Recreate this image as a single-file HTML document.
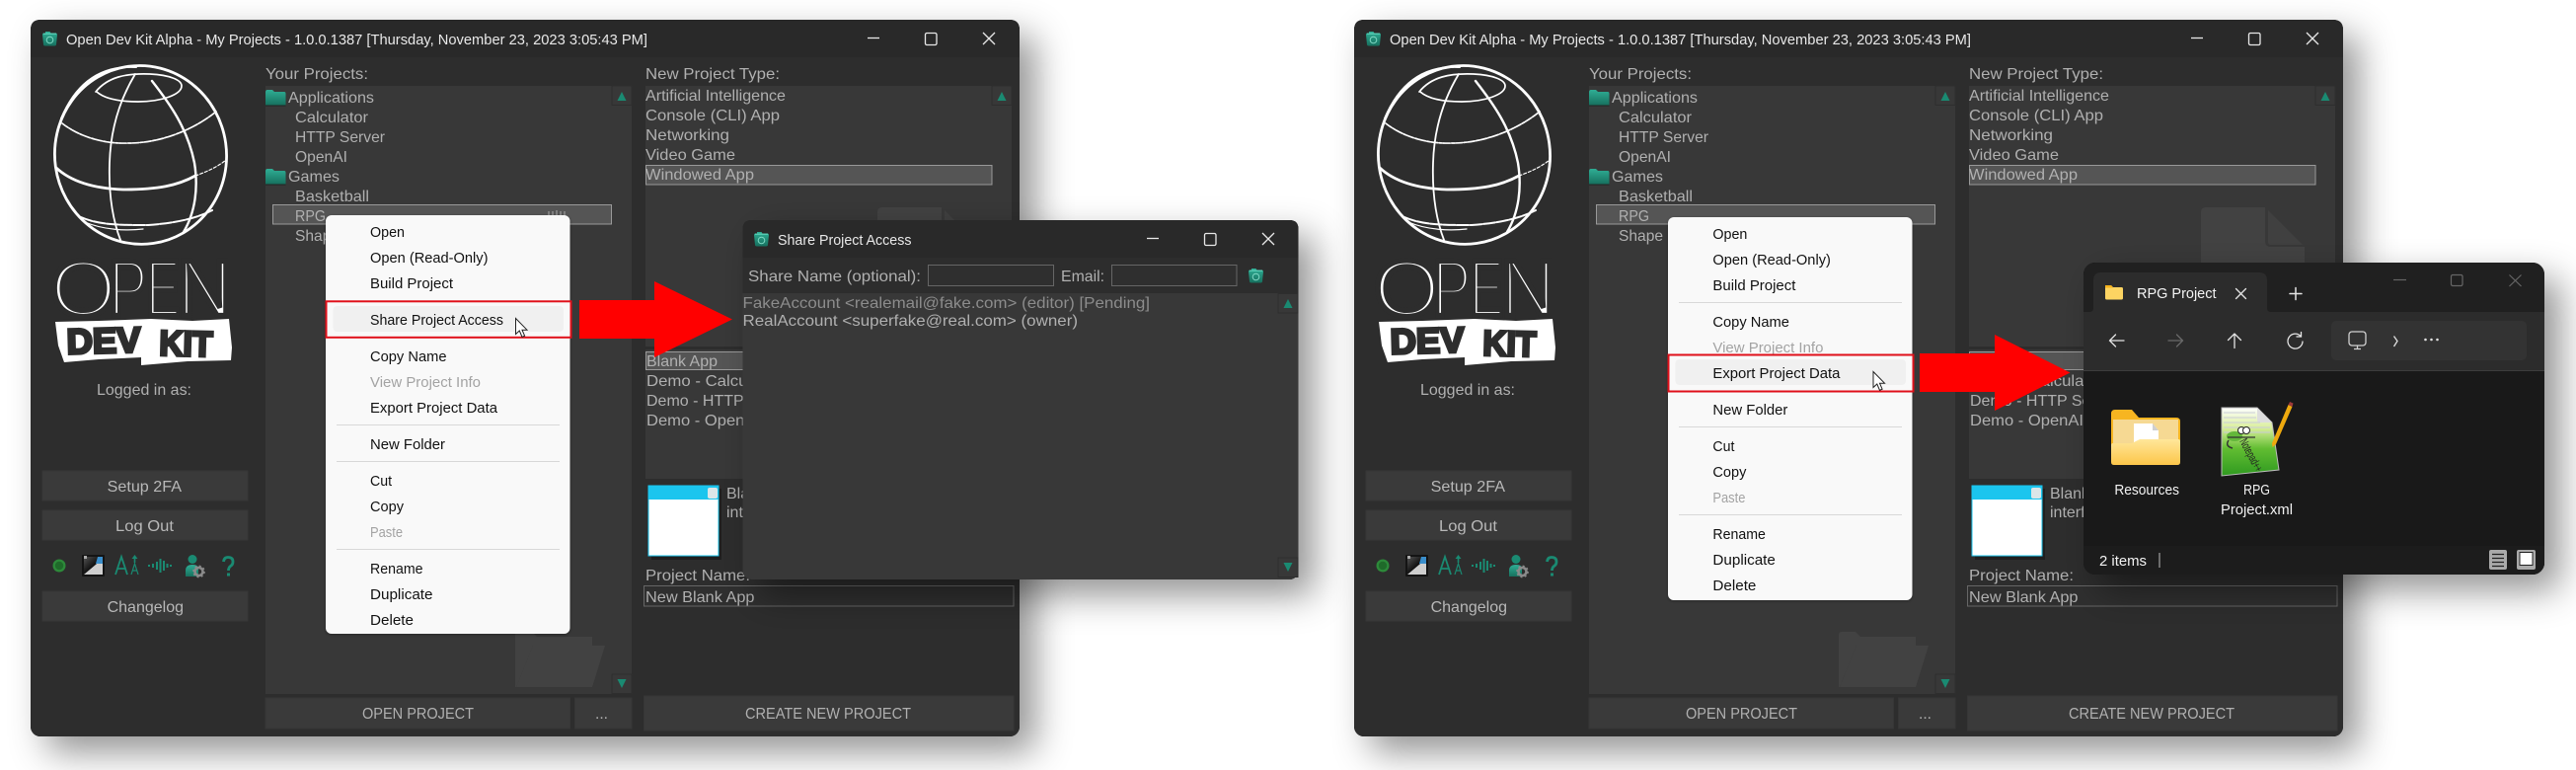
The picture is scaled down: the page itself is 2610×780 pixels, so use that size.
<!DOCTYPE html>
<html><head><meta charset="utf-8"><title>Open Dev Kit</title>
<style>
html,body{margin:0;padding:0;background:#fff;width:2610px;height:780px;overflow:hidden}
svg{position:absolute;left:0;top:0;display:block}
text{font-family:"Liberation Sans",sans-serif;white-space:pre}
.t{font-size:16px;fill:#b0b0b0}
.b{font-size:16px;fill:#b8b8b8}
.h{font-size:15px;fill:#e8e8e8}
.m{font-size:15px;fill:#111}
.g{font-size:15px;fill:#a3a3a3}
.e{font-size:15px;fill:#f2f2f2}
.o{font-size:80px;fill:#fff;stroke:#2d2d2d;stroke-width:5.2px}
.k{font-size:36px;font-weight:700;fill:#2d2d2d;stroke:#2d2d2d;stroke-width:3px}
</style></head><body>
<svg width="2610" height="780" viewBox="0 0 2610 780" xmlns="http://www.w3.org/2000/svg">
<defs>
<filter id="sh" filterUnits="userSpaceOnUse" x="0" y="0" width="2610" height="780"><feDropShadow dx="16" dy="16" stdDeviation="18" flood-color="#000" flood-opacity=".42"/></filter>
<filter id="ms" filterUnits="userSpaceOnUse" x="0" y="0" width="2610" height="780"><feDropShadow dx="0" dy="1" stdDeviation="1.5" flood-color="#000" flood-opacity=".3"/></filter>
<linearGradient id="tl" x1="0" y1="0" x2="0" y2="1"><stop offset="0" stop-color="#2fae95"/><stop offset="1" stop-color="#17705e"/></linearGradient>
<linearGradient id="yl" x1="0" y1="0" x2="0" y2="1"><stop offset="0" stop-color="#ffe79a"/><stop offset="1" stop-color="#fcc64a"/></linearGradient>
<linearGradient id="gr" x1="0" y1="0" x2="0" y2="1"><stop offset="0" stop-color="#fff"/><stop offset=".3" stop-color="#d9ee9a"/><stop offset=".6" stop-color="#62bd32"/><stop offset="1" stop-color="#2f9a20"/></linearGradient>
<linearGradient id="dk" x1="0" y1="0" x2="1" y2="1"><stop offset="0" stop-color="#555"/><stop offset=".5" stop-color="#111"/></linearGradient>
<clipPath id="ex"><rect x="2111" y="266" width="467" height="316" rx="12"/></clipPath>

<g id="globe" fill="none" stroke="#fff" stroke-linecap="round">
<ellipse cx="142.500" cy="157" rx="87" ry="90.500" stroke-width="2.800" transform="rotate(-8 142 157)"/>
<path d="M62 120C78 82 104 66 138 68" stroke-width="2"/>
<path d="M97 93C109 78 128 74 152 75C172 76 184 81 184 87C184 96 163 103 140 103C122 103 106 100 98 93" stroke-width="1.700"/>
<path d="M63 125C80 138 104 146 130 145C165 145 198 130 219 113" stroke-width="1.700" stroke-dasharray="7 1.500 3 1"/>
<path d="M57 170C72 184 96 191 125 192C160 192 180 188 198 178" stroke-width="2.800"/>
<path d="M198 178C210 174 222 168 229 162" stroke-width="1.200" stroke-dasharray="3 2"/>
<path d="M82 220C100 228 122 228 150 228C178 226 200 221 215 213" stroke-width="2" stroke-dasharray="12 1.500"/>
<path d="M86 225C105 233 128 234 145 232" stroke-width="1.200"/>
<path d="M137 75C122 100 112 130 111 165C110 195 114 222 122 243" stroke-width="1.800"/>
<path d="M154 82C172 105 190 130 197 165C201 190 198 215 186 235" stroke-width="2.400"/>
</g>

<g id="dfold"><path d="M269 93.500Q269 91 271 91H276L278 93H288Q289.500 93 289.500 95V106.500H269Z" fill="url(#tl)"/><path d="M269 106.500H289.500V107.500H269Z" fill="#222"/></g>

<g id="aico"><path d="M1 3Q1 1.500 2.500 1.500H4V0H8.500L9.500 1.500H14Q16 1.500 16 3L15 13Q15 14.500 13 14.500H4Q2 14.500 2 13Z" fill="url(#tl)"/><circle cx="8.500" cy="8.500" r="3.300" fill="none" stroke="#7fd8c4" stroke-width="1"/><rect x="2" y="1.500" width="13" height="1.500" fill="#55c9b1"/></g>

<g id="wbtn"><rect width="20" height="19.500" fill="#383838" stroke="#2e2e2e"/></g>

<g id="cur"><path d="M.5 .5V16.500L4.300 13L7 19.300L9.600 18.200L7 12.200H12Z" fill="#fff" stroke="#222" stroke-width="1"/></g>

<g id="icons">
<circle cx="60" cy="573" r="6.500" fill="#2d8a3a"/><circle cx="60" cy="573" r="4.200" fill="#1f6a2a"/>
<rect x="83" y="562" width="23" height="22" rx="1" fill="#141414"/><rect x="85" y="564" width="19" height="18" fill="url(#dk)"/><path d="M85 582L104 566V582Z" fill="#cfcfcf"/><path d="M99 564L104 564V571L97 571Z" fill="#3a8ecb"/><rect x="85" y="563" width="3" height="3" fill="#aaa"/>
<g fill="none" stroke="#1a8a72" stroke-width="1.800"><path d="M117 582L123 564L129 582M119 576H127"/><path d="M133 582L136.500 571L140 582M134.500 578H138.500" stroke-width="1.200"/><path d="M136.500 570V566" stroke-width="1.600"/></g><path d="M133.500 566L136.500 562L139.500 566Z" fill="#1a8a72"/>
<g stroke="#1a8a72" stroke-width="2"><path d="M151 572V574M155 571V575M159 569V577M162.500 566V580M166 568V578M169.500 571V575M173 572V574"/></g>
<circle cx="195" cy="566.500" r="4.500" fill="#1a8a72"/><path d="M188 584V578Q188 572 195 572Q201 572 201 576V584Z" fill="url(#tl)"/>
<circle cx="201.500" cy="579" r="4" fill="none" stroke="#8a8a8a" stroke-width="2.600"/><circle cx="201.500" cy="579" r="5.600" fill="none" stroke="#8a8a8a" stroke-width="1.500" stroke-dasharray="2 2.400"/>
<path d="M226.500 569Q227 564.500 231 564.500Q236 564.500 236 569Q236 572 233.500 573.500Q231.500 575 231.500 578" fill="none" stroke="#1a8a72" stroke-width="2.800"/><rect x="230" y="580.500" width="3" height="3" fill="#1a8a72"/>
</g>

<g id="base">
<rect x="31" y="20" width="1002" height="726" rx="10" fill="#2d2d2d"/>
<path d="M31 58V30Q31 20 41 20H1023Q1033 20 1033 30V58Z" fill="#292929"/>
<use href="#aico" x="42" y="32"/>
<g stroke="#e8e8e8" stroke-width="1.300" fill="none"><path d="M879 38.500H891"/><rect x="937.500" y="33.500" width="11.500" height="12" rx="1.500"/><path d="M996 33L1008 45M1008 33L996 45"/></g>
<use href="#globe"/>
<rect x="269" y="87" width="371" height="616" fill="#383838"/>
<path d="M522 696V643Q522 640 525 640H539L544 645H600V654H540L523 696Z" fill="#424242"/><path d="M540 654H613L600 696H523Z" fill="#424242"/>
<use href="#wbtn" x="620" y="87"/><path d="M625.500 102L630 93L634.500 102Z" fill="#1a8a72"/>
<use href="#wbtn" x="620" y="683"/><path d="M625.500 688H634.500L630 697Z" fill="#1a8a72"/>
<use href="#dfold"/><use href="#dfold" y="80"/>
<rect x="276.500" y="207.500" width="343" height="19.500" fill="#555" stroke="#999"/>
<rect x="654" y="87" width="371" height="264" fill="#383838"/>
<path d="M889 215Q889 210 894 210H954V244Q954 250 960 250H994V345H889Z" fill="#424242"/><path d="M957 213L992 248H960Q957 248 957 245Z" fill="#404040"/>
<use href="#wbtn" x="1005" y="87"/><path d="M1010.500 102L1015 93L1019.500 102Z" fill="#1a8a72"/>
<rect x="654.500" y="167.500" width="350.500" height="19.500" fill="#555" stroke="#999"/>
<rect x="654" y="354" width="371" height="131" fill="#383838"/>
<rect x="654.500" y="356.500" width="350.500" height="18" fill="#555" stroke="#999"/>
<rect x="660" y="495" width="71" height="72" fill="#1f1f1f"/>
<rect x="657" y="492" width="71" height="71" fill="#fff" stroke="#1bc5ee" stroke-width="1"/><rect x="657" y="492" width="71" height="14" fill="#1bc5ee"/><rect x="717" y="494" width="10" height="11" rx="2" fill="#dbe6e8"/>
<rect x="652.500" y="593.500" width="374.500" height="20.500" fill="#2f2f2f" stroke="#666"/>
<rect x="43" y="477" width="208" height="30" fill="#3a3a3a" stroke="#363636"/>
<rect x="43" y="517" width="208" height="30" fill="#3a3a3a" stroke="#363636"/>
<rect x="43" y="599" width="208" height="30" fill="#3a3a3a" stroke="#363636"/>
<use href="#icons"/>
<rect x="269" y="707" width="308.500" height="31" fill="#3a3a3a" stroke="#363636"/>
<rect x="582.500" y="707" width="57.500" height="31" fill="#3a3a3a" stroke="#363636"/>
<rect x="652.500" y="705" width="374.500" height="35" fill="#3a3a3a" stroke="#363636"/>
<path d="M56 326L100 325L153 323L195 325L232 323L235 352L234 365L190 366L143 370L143 362L100 364L65 367L59 350Z" fill="#fff"/>
</g>
</defs>

<rect width="2610" height="780" fill="#fff"/>

<!-- WINDOW 1 -->
<rect x="31" y="20" width="1002" height="726" rx="10" fill="#000" filter="url(#sh)"/>
<use href="#base"/>
<text class="h" x="67" y="45" textLength="589" lengthAdjust="spacingAndGlyphs">Open Dev Kit Alpha - My Projects - 1.0.0.1387 [Thursday, November 23, 2023 3:05:43 PM]</text>
<text class="o" x="51" y="319.600" textLength="67" lengthAdjust="spacingAndGlyphs">O</text>
<text class="o" x="110.800" y="319.600" textLength="38.500" lengthAdjust="spacingAndGlyphs">P</text>
<text class="o" x="148.200" y="319.600" textLength="34" lengthAdjust="spacingAndGlyphs">E</text>
<text class="o" x="179.500" y="319.600" textLength="55.500" lengthAdjust="spacingAndGlyphs">N</text>
<text class="k" x="67.500" y="357.500" textLength="75" lengthAdjust="spacingAndGlyphs" transform="rotate(-1.500 105 345)">DEV</text>
<text class="k" x="161.500" y="360.500" textLength="54" lengthAdjust="spacingAndGlyphs" transform="rotate(1.500 190 345)">KIT</text>
<text class="t" x="98" y="400" textLength="96" lengthAdjust="spacingAndGlyphs">Logged in as:</text>
<text class="b" x="108.600" y="498" textLength="75.400" lengthAdjust="spacingAndGlyphs">Setup 2FA</text>
<text class="b" x="117" y="538" textLength="59" lengthAdjust="spacingAndGlyphs">Log Out</text>
<text class="b" x="108.600" y="620" textLength="77.400" lengthAdjust="spacingAndGlyphs">Changelog</text>
<text class="t" x="269" y="80" textLength="104" lengthAdjust="spacingAndGlyphs">Your Projects:</text>
<text class="t" x="292" y="104" textLength="87" lengthAdjust="spacingAndGlyphs">Applications</text>
<text class="t" x="299" y="124" textLength="74" lengthAdjust="spacingAndGlyphs">Calculator</text>
<text class="t" x="299" y="144" textLength="91" lengthAdjust="spacingAndGlyphs">HTTP Server</text>
<text class="t" x="299" y="164" textLength="53" lengthAdjust="spacingAndGlyphs">OpenAI</text>
<text class="t" x="292" y="184" textLength="52" lengthAdjust="spacingAndGlyphs">Games</text>
<text class="t" x="299" y="204" textLength="75" lengthAdjust="spacingAndGlyphs">Basketball</text>
<text class="t" x="299" y="224" textLength="31" lengthAdjust="spacingAndGlyphs">RPG</text>
<text class="t" x="299" y="244" textLength="45" lengthAdjust="spacingAndGlyphs">Shape</text>
<text class="t" x="367" y="728" textLength="113" lengthAdjust="spacingAndGlyphs">OPEN PROJECT</text>
<text class="t" x="603" y="728" textLength="13" lengthAdjust="spacingAndGlyphs">...</text>
<text class="t" x="654" y="80" textLength="136" lengthAdjust="spacingAndGlyphs">New Project Type:</text>
<text class="t" x="654" y="102" textLength="142" lengthAdjust="spacingAndGlyphs">Artificial Intelligence</text>
<text class="t" x="654" y="122" textLength="136" lengthAdjust="spacingAndGlyphs">Console (CLI) App</text>
<text class="t" x="654" y="142" textLength="85" lengthAdjust="spacingAndGlyphs">Networking</text>
<text class="t" x="654" y="162" textLength="91" lengthAdjust="spacingAndGlyphs">Video Game</text>
<text class="t" x="654" y="182" textLength="110" lengthAdjust="spacingAndGlyphs">Windowed App</text>
<text class="t" x="655" y="371" textLength="72" lengthAdjust="spacingAndGlyphs">Blank App</text>
<text class="t" x="655" y="391" textLength="135" lengthAdjust="spacingAndGlyphs">Demo - Calculator</text>
<text class="t" x="655" y="411" textLength="150" lengthAdjust="spacingAndGlyphs">Demo - HTTP Server</text>
<text class="t" x="655" y="431" textLength="115" lengthAdjust="spacingAndGlyphs">Demo - OpenAI</text>
<text class="t" x="736" y="505">Blank App with a graphical</text>
<text class="t" x="736" y="524">interface</text>
<text class="t" x="654" y="588" textLength="106" lengthAdjust="spacingAndGlyphs">Project Name:</text>
<text class="t" x="654" y="610" textLength="110.500" lengthAdjust="spacingAndGlyphs">New Blank App</text>
<text class="t" x="755" y="728" textLength="168" lengthAdjust="spacingAndGlyphs">CREATE NEW PROJECT</text>
<path d="M556 214V218M560 214V218M564 213V218M568 214V218M572 214V218" stroke="#aaa" stroke-width="1"/>

<!-- Context menu 1 -->
<rect x="330" y="218" width="247.500" height="424" rx="6" fill="#f9f9f9" filter="url(#ms)"/>
<rect x="337.500" y="310" width="233.500" height="26" rx="4" fill="#f0f0f0"/>
<text class="m" x="375" y="240" textLength="35" lengthAdjust="spacingAndGlyphs">Open</text>
<text class="m" x="375" y="266" textLength="119.500" lengthAdjust="spacingAndGlyphs">Open (Read-Only)</text>
<text class="m" x="375" y="292" textLength="84" lengthAdjust="spacingAndGlyphs">Build Project</text>
<text class="m" x="375" y="329" textLength="135" lengthAdjust="spacingAndGlyphs">Share Project Access</text>
<text class="m" x="375" y="366" textLength="77.500" lengthAdjust="spacingAndGlyphs">Copy Name</text>
<text class="g" x="375" y="392" textLength="112" lengthAdjust="spacingAndGlyphs">View Project Info</text>
<text class="m" x="375" y="418" textLength="129" lengthAdjust="spacingAndGlyphs">Export Project Data</text>
<text class="m" x="375" y="455" textLength="76" lengthAdjust="spacingAndGlyphs">New Folder</text>
<text class="m" x="375" y="492" textLength="22" lengthAdjust="spacingAndGlyphs">Cut</text>
<text class="m" x="375" y="518" textLength="34" lengthAdjust="spacingAndGlyphs">Copy</text>
<text class="g" x="375" y="544" textLength="33" lengthAdjust="spacingAndGlyphs">Paste</text>
<text class="m" x="375" y="581" textLength="53.500" lengthAdjust="spacingAndGlyphs">Rename</text>
<text class="m" x="375" y="607" textLength="63.500" lengthAdjust="spacingAndGlyphs">Duplicate</text>
<text class="m" x="375" y="633" textLength="44" lengthAdjust="spacingAndGlyphs">Delete</text>
<path d="M341 430.500H567M341 467.500H567M341 556.500H567" stroke="#d8d8d8" stroke-width="1"/>
<rect x="330.500" y="305.300" width="248" height="36.500" fill="none" stroke="#e0101a" stroke-width="2"/>
<use href="#cur" x="522" y="322"/>
<path d="M587 304H663V285L742 323.500L663 362V343H587Z" fill="#f00"/>

<!-- Dialog -->
<rect x="752.500" y="223" width="563" height="364" rx="9" fill="#000" filter="url(#sh)"/>
<rect x="752.500" y="223" width="563" height="364" rx="9" fill="#383838"/>
<path d="M752.500 297V232Q752.500 223 761.500 223H1306.500Q1315.500 223 1315.500 232V297Z" fill="#2d2d2d"/>
<path d="M752.500 261V232Q752.500 223 761.500 223H1306.500Q1315.500 223 1315.500 232V261Z" fill="#292929"/>
<use href="#aico" x="763" y="235"/>
<text class="h" x="788" y="248" textLength="135.500" lengthAdjust="spacingAndGlyphs">Share Project Access</text>
<g stroke="#e8e8e8" stroke-width="1.300" fill="none"><path d="M1162 241.500H1174"/><rect x="1220.500" y="236.500" width="11.500" height="12" rx="1.500"/><path d="M1279 236L1291 248M1291 236L1279 248"/></g>
<text class="t" x="758" y="285" textLength="175" lengthAdjust="spacingAndGlyphs">Share Name (optional):</text>
<rect x="940.500" y="268.500" width="127" height="21" fill="#2f2f2f" stroke="#666"/>
<text class="t" x="1075" y="285" textLength="44" lengthAdjust="spacingAndGlyphs">Email:</text>
<rect x="1126.500" y="268.500" width="126.500" height="21" fill="#2f2f2f" stroke="#666"/>
<use href="#aico" x="1264" y="272"/>
<text style="font-size:16px;fill:#8c8c8c" x="752.500" y="312" textLength="412.500" lengthAdjust="spacingAndGlyphs">FakeAccount &lt;realemail@fake.com&gt; (editor) [Pending]</text>
<text class="t" x="752.500" y="330" textLength="339.500" lengthAdjust="spacingAndGlyphs">RealAccount &lt;superfake@real.com&gt; (owner)</text>
<use href="#wbtn" x="1295" y="297.500"/><path d="M1300.500 312L1305 303L1309.500 312Z" fill="#1a8a72"/>
<use href="#wbtn" x="1295" y="565"/><path d="M1300.500 570H1309.500L1305 579Z" fill="#1a8a72"/>

<!-- WINDOW 2 -->
<rect x="1372" y="20" width="1002" height="726" rx="10" fill="#000" filter="url(#sh)"/>
<g transform="translate(1341 0)">
<use href="#base"/>
<text class="h" x="67" y="45" textLength="589" lengthAdjust="spacingAndGlyphs">Open Dev Kit Alpha - My Projects - 1.0.0.1387 [Thursday, November 23, 2023 3:05:43 PM]</text>
<text class="o" x="51" y="319.600" textLength="67" lengthAdjust="spacingAndGlyphs">O</text>
<text class="o" x="110.800" y="319.600" textLength="38.500" lengthAdjust="spacingAndGlyphs">P</text>
<text class="o" x="148.200" y="319.600" textLength="34" lengthAdjust="spacingAndGlyphs">E</text>
<text class="o" x="179.500" y="319.600" textLength="55.500" lengthAdjust="spacingAndGlyphs">N</text>
<text class="k" x="67.500" y="357.500" textLength="75" lengthAdjust="spacingAndGlyphs" transform="rotate(-1.500 105 345)">DEV</text>
<text class="k" x="161.500" y="360.500" textLength="54" lengthAdjust="spacingAndGlyphs" transform="rotate(1.500 190 345)">KIT</text>
<text class="t" x="98" y="400" textLength="96" lengthAdjust="spacingAndGlyphs">Logged in as:</text>
<text class="b" x="108.600" y="498" textLength="75.400" lengthAdjust="spacingAndGlyphs">Setup 2FA</text>
<text class="b" x="117" y="538" textLength="59" lengthAdjust="spacingAndGlyphs">Log Out</text>
<text class="b" x="108.600" y="620" textLength="77.400" lengthAdjust="spacingAndGlyphs">Changelog</text>
<text class="t" x="269" y="80" textLength="104" lengthAdjust="spacingAndGlyphs">Your Projects:</text>
<text class="t" x="292" y="104" textLength="87" lengthAdjust="spacingAndGlyphs">Applications</text>
<text class="t" x="299" y="124" textLength="74" lengthAdjust="spacingAndGlyphs">Calculator</text>
<text class="t" x="299" y="144" textLength="91" lengthAdjust="spacingAndGlyphs">HTTP Server</text>
<text class="t" x="299" y="164" textLength="53" lengthAdjust="spacingAndGlyphs">OpenAI</text>
<text class="t" x="292" y="184" textLength="52" lengthAdjust="spacingAndGlyphs">Games</text>
<text class="t" x="299" y="204" textLength="75" lengthAdjust="spacingAndGlyphs">Basketball</text>
<text class="t" x="299" y="224" textLength="31" lengthAdjust="spacingAndGlyphs">RPG</text>
<text class="t" x="299" y="244" textLength="45" lengthAdjust="spacingAndGlyphs">Shape</text>
<text class="t" x="367" y="728" textLength="113" lengthAdjust="spacingAndGlyphs">OPEN PROJECT</text>
<text class="t" x="603" y="728" textLength="13" lengthAdjust="spacingAndGlyphs">...</text>
<text class="t" x="654" y="80" textLength="136" lengthAdjust="spacingAndGlyphs">New Project Type:</text>
<text class="t" x="654" y="102" textLength="142" lengthAdjust="spacingAndGlyphs">Artificial Intelligence</text>
<text class="t" x="654" y="122" textLength="136" lengthAdjust="spacingAndGlyphs">Console (CLI) App</text>
<text class="t" x="654" y="142" textLength="85" lengthAdjust="spacingAndGlyphs">Networking</text>
<text class="t" x="654" y="162" textLength="91" lengthAdjust="spacingAndGlyphs">Video Game</text>
<text class="t" x="654" y="182" textLength="110" lengthAdjust="spacingAndGlyphs">Windowed App</text>
<text class="t" x="655" y="371" textLength="72" lengthAdjust="spacingAndGlyphs">Blank App</text>
<text class="t" x="655" y="391" textLength="135" lengthAdjust="spacingAndGlyphs">Demo - Calculator</text>
<text class="t" x="655" y="411" textLength="150" lengthAdjust="spacingAndGlyphs">Demo - HTTP Server</text>
<text class="t" x="655" y="431" textLength="115" lengthAdjust="spacingAndGlyphs">Demo - OpenAI</text>
<text class="t" x="736" y="505">Blank App with a graphical</text>
<text class="t" x="736" y="524">interface</text>
<text class="t" x="654" y="588" textLength="106" lengthAdjust="spacingAndGlyphs">Project Name:</text>
<text class="t" x="654" y="610" textLength="110.500" lengthAdjust="spacingAndGlyphs">New Blank App</text>
<text class="t" x="755" y="728" textLength="168" lengthAdjust="spacingAndGlyphs">CREATE NEW PROJECT</text>
</g>

<!-- Context menu 2 -->
<rect x="1690" y="220" width="247.500" height="388" rx="6" fill="#f9f9f9" filter="url(#ms)"/>
<rect x="1697.500" y="364" width="233.500" height="26" rx="4" fill="#f0f0f0"/>
<text class="m" x="1735.400" y="242" textLength="35" lengthAdjust="spacingAndGlyphs">Open</text>
<text class="m" x="1735.400" y="268" textLength="119.500" lengthAdjust="spacingAndGlyphs">Open (Read-Only)</text>
<text class="m" x="1735.400" y="294" textLength="84" lengthAdjust="spacingAndGlyphs">Build Project</text>
<text class="m" x="1735.400" y="331" textLength="77.500" lengthAdjust="spacingAndGlyphs">Copy Name</text>
<text class="g" x="1735.400" y="357" textLength="112" lengthAdjust="spacingAndGlyphs">View Project Info</text>
<text class="m" x="1735.400" y="383" textLength="129" lengthAdjust="spacingAndGlyphs">Export Project Data</text>
<text class="m" x="1735.400" y="420" textLength="76" lengthAdjust="spacingAndGlyphs">New Folder</text>
<text class="m" x="1735.400" y="457" textLength="22" lengthAdjust="spacingAndGlyphs">Cut</text>
<text class="m" x="1735.400" y="483" textLength="34" lengthAdjust="spacingAndGlyphs">Copy</text>
<text class="g" x="1735.400" y="509" textLength="33" lengthAdjust="spacingAndGlyphs">Paste</text>
<text class="m" x="1735.400" y="546" textLength="53.500" lengthAdjust="spacingAndGlyphs">Rename</text>
<text class="m" x="1735.400" y="572" textLength="63.500" lengthAdjust="spacingAndGlyphs">Duplicate</text>
<text class="m" x="1735.400" y="598" textLength="44" lengthAdjust="spacingAndGlyphs">Delete</text>
<path d="M1701 306.500H1927M1701 432.500H1927M1701 521.500H1927" stroke="#d8d8d8" stroke-width="1"/>
<rect x="1690.500" y="359.500" width="248" height="37" fill="none" stroke="#e0101a" stroke-width="2"/>
<use href="#cur" x="1897.500" y="376"/>

<!-- Explorer -->
<rect x="2111" y="266" width="467" height="316" rx="12" fill="#000" filter="url(#sh)"/>
<g clip-path="url(#ex)">
<rect x="2111" y="266" width="467" height="316" fill="#202020"/>
<rect x="2111" y="316" width="467" height="59" fill="#2c2c2c"/>
<path d="M2117 316Q2121 316 2121 312V284Q2121 276 2129 276H2289Q2297 276 2297 284V312Q2297 316 2301 316Z" fill="#2c2c2c"/>
<rect x="2111" y="375" width="467" height="1" fill="#3c3c3c"/>
<rect x="2111" y="376" width="467" height="177" fill="#191919"/>
<rect x="2111" y="553" width="467" height="29" fill="#1c1c1c"/>
</g>
<path d="M2133 290.500Q2133 289 2134.500 289H2139L2141 291H2149.500Q2151 291 2151 292.500V302Q2151 303.500 2149.500 303.500H2134.500Q2133 303.500 2133 302Z" fill="#fcd462"/><path d="M2133 289H2139L2141 291.500H2133Z" fill="#f5b21c"/>
<text x="2165" y="302" font-size="15" fill="#f4f4f4" textLength="80.500" lengthAdjust="spacingAndGlyphs">RPG Project</text>
<g fill="none" stroke="#e4e4e4" stroke-width="1.300" stroke-linecap="round">
<path d="M2265.500 292.500L2275.500 302.500M2275.500 292.500L2265.500 302.500"/>
<path d="M2326 291.500V303.500M2320 297.500H2332" stroke-width="1.500"/>
<path d="M2137.500 345H2152M2143.500 339L2137.500 345L2143.500 351"/>
<path d="M2264 338V352.500M2257.500 344.500L2264 338L2270.500 344.500"/>
<path d="M2331 340.500A7.500 7.500 0 1 0 2333 346M2331.500 336.500V341H2327"/>
</g>
<path d="M2197 345H2211.500M2205.500 339L2211.500 345L2205.500 351" fill="none" stroke="#6a6a6a" stroke-width="1.300" stroke-linecap="round"/>
<g fill="none" stroke="#666" stroke-width="1.200"><path d="M2425 283.500H2438"/><rect x="2483.500" y="278.500" width="11.500" height="11" rx="1.500"/><path d="M2542.500 278.500L2554.500 290M2554.500 278.500L2542.500 290"/></g>
<rect x="2362" y="325" width="198" height="40" rx="5" fill="#333"/>
<g fill="none" stroke="#d0d0d0" stroke-width="1.300"><rect x="2380" y="336" width="17" height="14" rx="3"/><path d="M2385 353.500H2392M2388.500 350V353.500"/><path d="M2425.500 340.500L2429 345.500L2425.500 351" stroke="#e0e0e0"/></g>
<g fill="#e0e0e0"><circle cx="2457.500" cy="344" r="1.300"/><circle cx="2463.500" cy="344" r="1.300"/><circle cx="2469.500" cy="344" r="1.300"/></g>

<!-- Folder -->
<path d="M2139 419Q2139 415 2143 415H2160L2167 423H2205Q2209 423 2209 427V467H2139Z" fill="#f7b521"/>
<rect x="2141" y="425" width="66" height="26" fill="#f6d993"/>
<path d="M2162 429H2181L2187 436V449H2162Z" fill="#fff"/><path d="M2181 429V436H2187Z" fill="#cfcfcf"/>
<path d="M2139 451Q2139 449 2141 449H2160L2168 445H2207Q2209 445 2209 447V468Q2209 471 2206 471H2142Q2139 471 2139 468Z" fill="url(#yl)"/>
<text class="e" x="2142.400" y="501" textLength="65.600" lengthAdjust="spacingAndGlyphs">Resources</text>

<!-- Notepad++ -->
<path d="M2251 413H2287L2302 428L2309 476L2251 482Z" fill="url(#gr)" stroke="#bbb" stroke-width="1"/>
<path d="M2287 413V425.500Q2287 428 2290 428H2302Z" fill="#ddd"/>
<path d="M2253 418H2285M2253 423H2286M2253 428H2290M2253 433H2300M2253 438H2300" stroke="#c9ccd8" stroke-width="1"/>
<ellipse cx="2264" cy="442" rx="8" ry="5" fill="#63b83a"/><circle cx="2271" cy="436" r="3.500" fill="#fff" stroke="#222"/><circle cx="2276" cy="436" r="3.500" fill="#fff" stroke="#222"/><path d="M2258 446Q2254 452 2262 454" fill="none" stroke="#333" stroke-width="1.500"/><path d="M2257 443H2285" stroke="#333" stroke-width="1.200"/>
<text x="2269" y="447" font-size="12" fill="#222" textLength="36" lengthAdjust="spacingAndGlyphs" transform="rotate(62 2269 447)">Notepad++</text>
<path d="M2318.500 410L2322.500 412L2306 450L2302.500 453L2302 449Z" fill="#eea90e"/><path d="M2320 407L2323.500 408.500L2322.500 412L2318.500 410Z" fill="#9c3a3a"/>
<text class="e" x="2273" y="501" textLength="27" lengthAdjust="spacingAndGlyphs">RPG</text>
<text class="e" x="2250" y="521" textLength="73" lengthAdjust="spacingAndGlyphs">Project.xml</text>
<text class="e" x="2127" y="573" textLength="48" lengthAdjust="spacingAndGlyphs">2 items</text>
<rect x="2187.500" y="560" width="1" height="15" fill="#bbb"/>
<rect x="2522" y="557" width="18" height="20" rx="2" fill="#aaa"/><path d="M2525 561.500H2537M2525 565.500H2537M2525 569.500H2537M2525 573.500H2537" stroke="#222" stroke-width="1.200"/>
<rect x="2550" y="557" width="19" height="20" rx="2" fill="#aaa"/><rect x="2553" y="559.500" width="13" height="13" fill="#fff" stroke="#222"/>

<path d="M1945 358H2021V339L2097.500 377.500L2021 416V397H1945Z" fill="#f00"/>
</svg>
</body></html>
